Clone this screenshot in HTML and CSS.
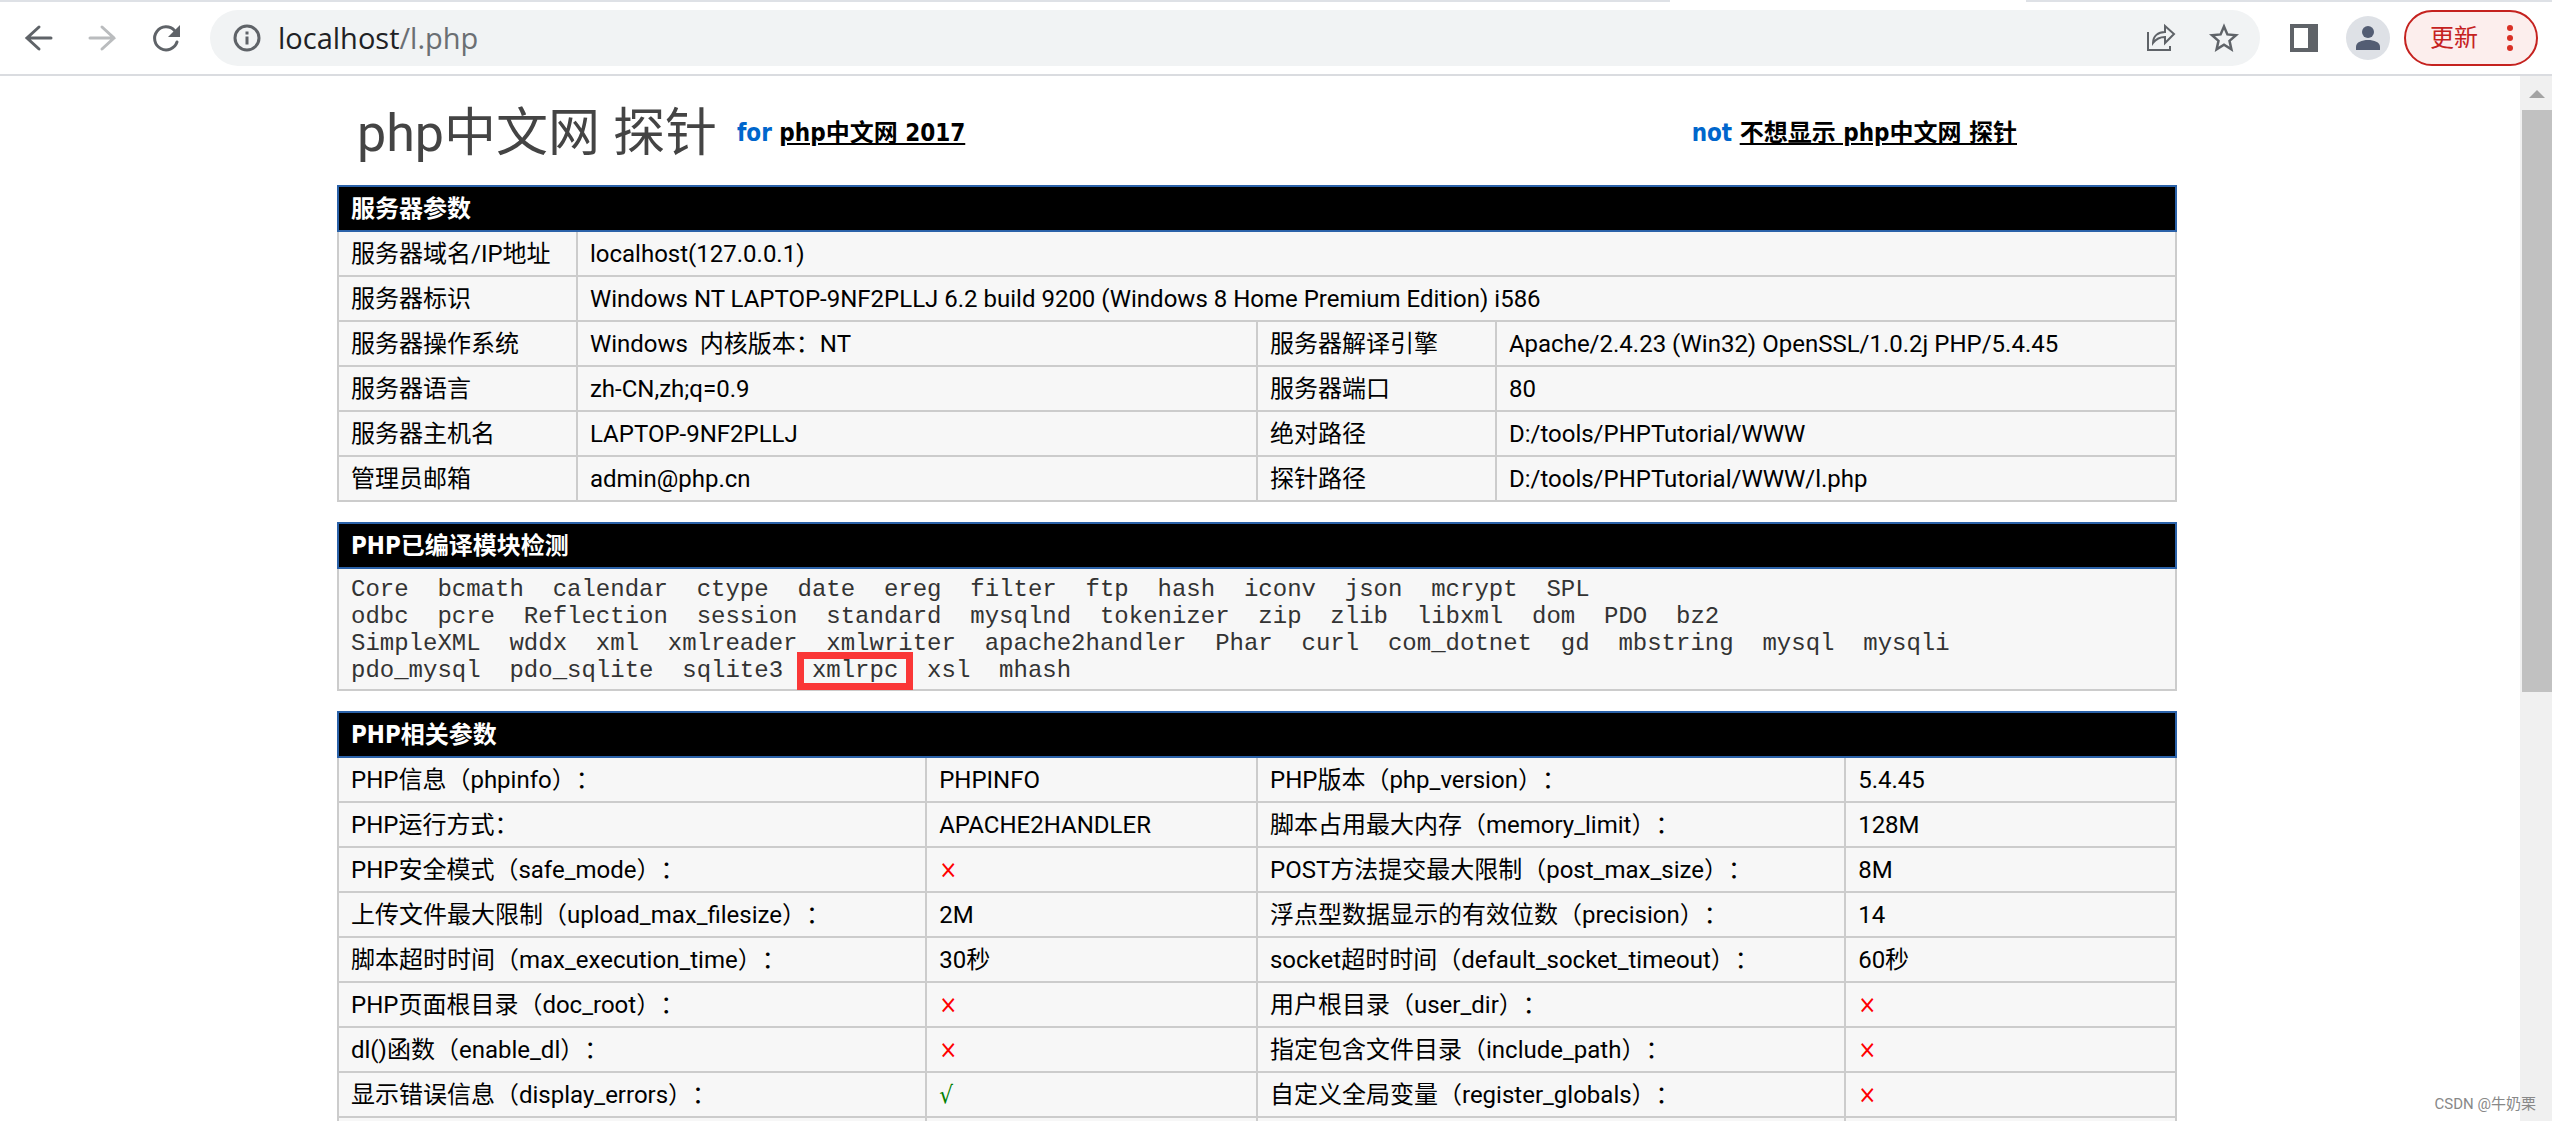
FILE: index.html
```html
<!DOCTYPE html>
<html lang="zh-CN">
<head>
	<meta charset="UTF-8">
	<meta name="viewport" content="width=device-width, initial-scale=1.0">
	<title>php中文网 探针</title>
	<link rel="stylesheet" href="styles.css">
</head>
<body>
	<header class="toolbar">
		<button class="nav-btn" type="button" aria-label="Back">
			<svg viewBox="0 0 32 32" width="32" height="32"><path d="M29 16H5M17 5 5 16l12 11" fill="none" stroke="#5f6368" stroke-width="3" stroke-linecap="round"/></svg>
		</button>
		<button class="nav-btn" type="button" aria-label="Forward" disabled>
			<svg viewBox="0 0 32 32" width="32" height="32"><path d="M4 16h24M16 5l12 11-12 11" fill="none" stroke="#babcbe" stroke-width="3" stroke-linecap="round"/></svg>
		</button>
		<button class="nav-btn" type="button" aria-label="Reload">
			<svg viewBox="0 0 32 32" width="32" height="32"><path d="M27 20A11.500 11.500 0 1 1 24.500 8.500" fill="none" stroke="#5f6368" stroke-width="3" stroke-linecap="round"/><path d="M30 3v12H18z" fill="#5f6368"/></svg>
		</button>
		<div class="omnibox">
			<svg viewBox="0 0 28 28" width="28" height="28"><circle cx="14" cy="14" r="12" fill="none" stroke="#5f6368" stroke-width="3"/><path d="M12.500 7.500h3v3h-3zM12.500 12.500h3v8h-3z" fill="#5f6368"/></svg>
			<a class="url" href="#">localhost<span>/l.php</span></a>
			<button class="box-btn" type="button" aria-label="Share">
				<svg viewBox="0 0 32 32" width="32" height="32"><path d="M4 10v18h22v-4M9 21C9 14 14 10 21 10V4l9 8-9 9v-6c-6 0-9 2-12 6z" fill="none" stroke="#5f6368" stroke-width="2"/></svg>
			</button>
			<button class="box-btn" type="button" aria-label="Bookmark">
				<svg viewBox="0 0 32 32" width="32" height="32"><path d="M16 4.500l3.400 7.900 8.600.8-6.500 5.700 1.900 8.400-7.400-4.500-7.400 4.500 1.900-8.400L4 13.200l8.600-.8z" fill="none" stroke="#5f6368" stroke-width="2.500"/></svg>
			</button>
		</div>
		<button class="side-btn" type="button" aria-label="Side panel">
			<svg viewBox="0 0 28 28" width="28" height="28"><path fill-rule="evenodd" d="M0 0h28v28H0zM4 4v20h14V4z" fill="#5f6368"/></svg>
		</button>
		<button class="avatar" type="button" aria-label="Profile">
			<svg viewBox="0 0 44 44" width="44" height="44"><circle cx="22" cy="22" r="22" fill="#dee1e6"/><circle cx="22" cy="16" r="6" fill="#535d73"/><path d="M10 34v-3c0-5 6-7 12-7s12 2 12 7v3z" fill="#535d73"/></svg>
		</button>
		<button class="update" type="button">更新
			<svg viewBox="0 0 8 28" width="8" height="28"><circle cx="4" cy="4" r="3" fill="#d93025"/><circle cx="4" cy="14" r="3" fill="#d93025"/><circle cx="4" cy="24" r="3" fill="#d93025"/></svg>
		</button>
	</header>

	<div class="viewport">
		<main class="page">
			<div class="head">
				<h1>php中文网 探针</h1>
				<p><b>for</b> <a href="#">php中文网 2017</a></p>
				<p class="hide-link"><b>not</b> <a href="#">不想显示 php中文网 探针</a></p>
			</div>

			<table class="server">
				<colgroup><col class="w13"><col class="w37"><col class="w13"><col class="w37"></colgroup>
				<tr><th colspan="4">服务器参数</th></tr>
				<tr><td>服务器域名/IP地址</td><td colspan="3">localhost(127.0.0.1)</td></tr>
				<tr><td>服务器标识</td><td colspan="3">Windows NT LAPTOP-9NF2PLLJ 6.2 build 9200 (Windows 8 Home Premium Edition) i586</td></tr>
				<tr><td>服务器操作系统</td><td>Windows &nbsp;内核版本：NT</td><td>服务器解译引擎</td><td>Apache/2.4.23 (Win32) OpenSSL/1.0.2j PHP/5.4.45</td></tr>
				<tr><td>服务器语言</td><td>zh-CN,zh;q=0.9</td><td>服务器端口</td><td>80</td></tr>
				<tr><td>服务器主机名</td><td>LAPTOP-9NF2PLLJ</td><td>绝对路径</td><td>D:/tools/PHPTutorial/WWW</td></tr>
				<tr><td>管理员邮箱</td><td>admin@php.cn</td><td>探针路径</td><td>D:/tools/PHPTutorial/WWW/l.php</td></tr>
			</table>

			<table class="modules">
				<tr><th>PHP已编译模块检测</th></tr>
				<tr><td>Core&nbsp; bcmath&nbsp; calendar&nbsp; ctype&nbsp; date&nbsp; ereg&nbsp; filter&nbsp; ftp&nbsp; hash&nbsp; iconv&nbsp; json&nbsp; mcrypt&nbsp; SPL<br>
				odbc&nbsp; pcre&nbsp; Reflection&nbsp; session&nbsp; standard&nbsp; mysqlnd&nbsp; tokenizer&nbsp; zip&nbsp; zlib&nbsp; libxml&nbsp; dom&nbsp; PDO&nbsp; bz2<br>
				SimpleXML&nbsp; wddx&nbsp; xml&nbsp; xmlreader&nbsp; xmlwriter&nbsp; apache2handler&nbsp; Phar&nbsp; curl&nbsp; com_dotnet&nbsp; gd&nbsp; mbstring&nbsp; mysql&nbsp; mysqli<br>
				pdo_mysql&nbsp; pdo_sqlite&nbsp; sqlite3&nbsp; <span class="mark">xmlrpc</span>&nbsp; xsl&nbsp; mhash</td></tr>
			</table>

			<table class="params">
				<colgroup><col class="w32"><col class="w18"><col class="w32"><col class="w18"></colgroup>
				<tr><th colspan="4">PHP相关参数</th></tr>
				<tr><td>PHP信息（phpinfo）：</td><td>PHPINFO</td><td>PHP版本（php_version）：</td><td>5.4.45</td></tr>
				<tr><td>PHP运行方式：</td><td>APACHE2HANDLER</td><td>脚本占用最大内存（memory_limit）：</td><td>128M</td></tr>
				<tr><td>PHP安全模式（safe_mode）：</td><td class="no">×</td><td>POST方法提交最大限制（post_max_size）：</td><td>8M</td></tr>
				<tr><td>上传文件最大限制（upload_max_filesize）：</td><td>2M</td><td>浮点型数据显示的有效位数（precision）：</td><td>14</td></tr>
				<tr><td>脚本超时时间（max_execution_time）：</td><td>30秒</td><td>socket超时时间（default_socket_timeout）：</td><td>60秒</td></tr>
				<tr><td>PHP页面根目录（doc_root）：</td><td class="no">×</td><td>用户根目录（user_dir）：</td><td class="no">×</td></tr>
				<tr><td>dl()函数（enable_dl）：</td><td class="no">×</td><td>指定包含文件目录（include_path）：</td><td class="no">×</td></tr>
				<tr><td>显示错误信息（display_errors）：</td><td class="yes">√</td><td>自定义全局变量（register_globals）：</td><td class="no">×</td></tr>
				<tr><td>&nbsp;</td><td></td><td></td><td></td></tr>
			</table>
		</main>
		<div class="scrollbar">
			<svg viewBox="0 0 16 8" width="16" height="8"><path d="M8 0l8 8H0z" fill="#a3a3a3"/></svg>
			<div class="thumb"></div>
		</div>
	</div>
	<div class="watermark">CSDN @牛奶栗</div>
</body>
</html>
```
FILE: styles.css
```css
* {
	box-sizing: border-box;
}

body {
	margin: 0;
	height: 100vh;
	display: flex;
	flex-direction: column;
	overflow: hidden;
	background: #fff;
	color: #000;
	font: 24px/31px Roboto, "Noto Sans CJK SC", sans-serif;
	text-spacing-trim: space-all;
}

button {
	padding: 0;
	border: 0;
	background: none;
	font: inherit;
}

svg {
	display: block;
}

/* browser bar, the gap in the top line is the active tab */
.toolbar {
	flex: none;
	display: flex;
	align-items: center;
	height: 76px;
	padding: 2px 14px 0 22px;
	border-bottom: 2px solid #dadce0;
	background: linear-gradient(90deg, #dee1e6 1670px, #fff 1670px, #fff 2026px, #dee1e6 2026px) top / 100% 2px no-repeat;
}

.nav-btn {
	margin-right: 32px;
}

.omnibox {
	flex: 1;
	display: flex;
	align-items: center;
	height: 56px;
	margin-left: -4px;
	padding: 0 20px 0 23px;
	border-radius: 28px;
	background: #f1f3f4;
}

.url {
	flex: 1;
	margin-left: 17px;
	color: #202124;
	font: 29px/40px "Open Sans", sans-serif;
	text-decoration: none;
}

.url span {
	color: #6b6f73;
}

.box-btn {
	margin-left: 32px;
}

.side-btn {
	margin-left: 30px;
}

.avatar {
	margin: 0 14px 0 28px;
}

.update {
	display: flex;
	align-items: center;
	gap: 28px;
	height: 56px;
	padding: 0 22px 0 24px;
	border: 2px solid #c5221f;
	border-radius: 28px;
	background: #fceeed;
	color: #c5221f;
}

/* page */
.viewport {
	flex: 1;
	display: flex;
	min-height: 0;
}

.page {
	flex: 1;
	padding-right: 6px;
	overflow: hidden;
}

.head {
	display: flex;
	align-items: center;
	width: 1840px;
	max-width: 100%;
	height: 109px;
	margin: 0 auto;
	padding: 6px 160px 0 20px;
}

.head h1 {
	margin: 0 20px 0 0;
	color: #444;
	font-size: 52px;
	font-weight: 400;
	line-height: 64px;
}

.head p,
th {
	font-family: "DejaVu Sans Condensed", "Noto Sans CJK SC", sans-serif;
	font-weight: 700;
}

.head p {
	margin: 0;
}

.head b {
	color: #06c;
}

.head a {
	color: #000;
}

.head .hide-link {
	margin-left: auto;
}

table {
	width: 1840px;
	max-width: 100%;
	margin: 0 auto 20px;
	border-collapse: collapse;
	table-layout: fixed;
}

th,
td {
	height: 45px;
	padding: 7px 12px 5px;
	border: 2px solid #ccc;
	background: #f7f7f7;
	text-align: left;
	white-space: nowrap;
}

th {
	border-color: #2b62a9;
	background: #000;
	color: #fff;
}

.w13 {
	width: 13%;
}

.w37 {
	width: 37%;
}

.w32 {
	width: 32%;
}

.w18 {
	width: 18%;
}

.modules td {
	color: #333;
	font: 24px/27px "Liberation Mono", monospace;
}

.mark {
	position: relative;
}

.mark::after {
	content: "";
	position: absolute;
	inset: -5px -15px -6px;
	border: 7px solid #fa3737;
}

.no,
.yes {
	font-family: "DejaVu Sans Condensed", sans-serif;
}

.no {
	color: #f00;
}

.yes {
	color: #008000;
}

.scrollbar {
	width: 32px;
	padding-left: 2px;
	background: #f0f0f0;
}

.scrollbar svg {
	margin: 14px 0 12px 7px;
}

.thumb {
	height: 55.7%;
	background: #c1c1c1;
}

.watermark {
	position: absolute;
	right: 16px;
	bottom: 6px;
	color: #888;
	font-size: 15px;
	line-height: 22px;
}
```
